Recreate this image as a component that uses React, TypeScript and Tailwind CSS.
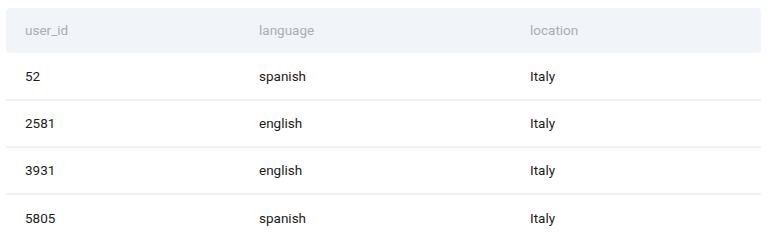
const rows = [
  { id: "52", language: "spanish", location: "Italy" },
  { id: "2581", language: "english", location: "Italy" },
  { id: "3931", language: "english", location: "Italy" },
  { id: "5805", language: "spanish", location: "Italy" },
];

export default function App() {
  return (
    <div className="bg-white px-[6px] pt-[8px] font-['Roboto',sans-serif] text-[13.5px]">
      <table className="w-[755px] table-fixed border-collapse">
        <colgroup>
          <col className="w-[234px]" />
          <col className="w-[271px]" />
          <col className="w-[250px]" />
        </colgroup>
        <thead>
          <tr className="h-[45px] text-left text-[#a7afba]">
            <th className="rounded-l-[4px] bg-[#f1f4f8] pl-[19px] font-normal">user_id</th>
            <th className="bg-[#f1f4f8] pl-[19px] font-normal">language</th>
            <th className="rounded-r-[4px] bg-[#f1f4f8] pl-[19px] font-normal">location</th>
          </tr>
        </thead>
        <tbody className="text-[#1c1c1c]">
          {rows.map((r, i) => (
            <tr
              key={r.id}
              className={
                i < rows.length - 1
                  ? "h-[47px] border-b-2 border-[#eef1f5]"
                  : "h-[47px]"
              }
            >
              <td className="pl-[19px]">{r.id}</td>
              <td className="pl-[19px]">{r.language}</td>
              <td className="pl-[19px]">{r.location}</td>
            </tr>
          ))}
        </tbody>
      </table>
    </div>
  );
}
